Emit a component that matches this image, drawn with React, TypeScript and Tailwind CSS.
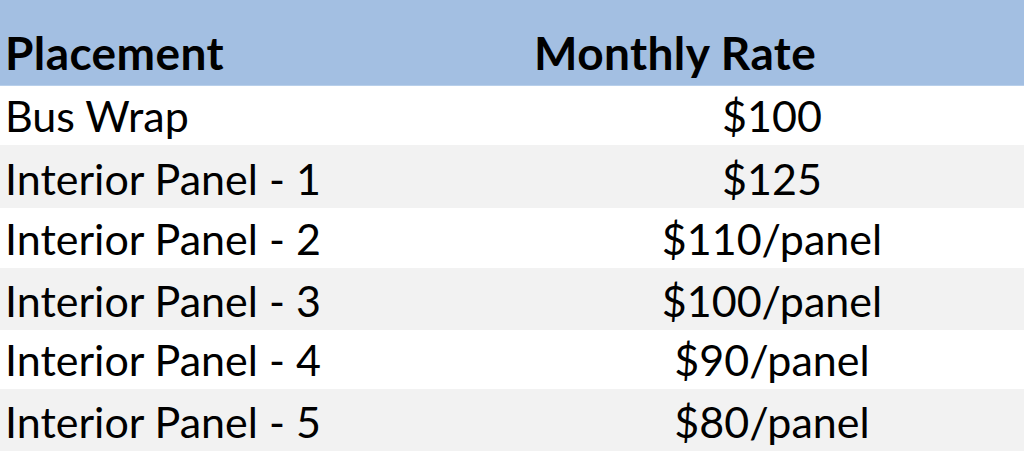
import React from 'react';

const rows = [
  { placement: 'Bus Wrap', rate: '$100', h: 'h-[59px]', bg: 'bg-white' },
  { placement: 'Interior Panel - 1', rate: '$125', h: 'h-[63px]', bg: 'bg-[#f2f2f2]' },
  { placement: 'Interior Panel - 2', rate: '$110/panel', h: 'h-[60px]', bg: 'bg-white' },
  { placement: 'Interior Panel - 3', rate: '$100/panel', h: 'h-[62px]', bg: 'bg-[#f2f2f2]' },
  { placement: 'Interior Panel - 4', rate: '$90/panel', h: 'h-[59px]', bg: 'bg-white' },
  { placement: 'Interior Panel - 5', rate: '$80/panel', h: 'h-[62px]', bg: 'bg-[#f2f2f2]' },
];

const App = () => {
  return (
    <div className="w-[1024px] h-[451px] overflow-hidden bg-white text-black font-['Lato',sans-serif]">
      <div className="grid grid-cols-[530px_1fr] h-[86px] bg-[#a3bfe2] border-b border-[#b8cfea] items-end pb-[9px] text-[46px] font-bold leading-none tracking-[0.4px]">
        <div className="pl-[5px]">Placement</div>
        <div className="pl-[4px]">Monthly Rate</div>
      </div>
      {rows.map((row, i) => (
        <div key={i} className={`grid grid-cols-[530px_484px] ${row.h} ${row.bg} items-end pb-[8px] text-[43px] leading-none`}>
          <div className="pl-[5px]">{row.placement}</div>
          <div className="text-center">{row.rate}</div>
        </div>
      ))}
    </div>
  );
};

export default App;
